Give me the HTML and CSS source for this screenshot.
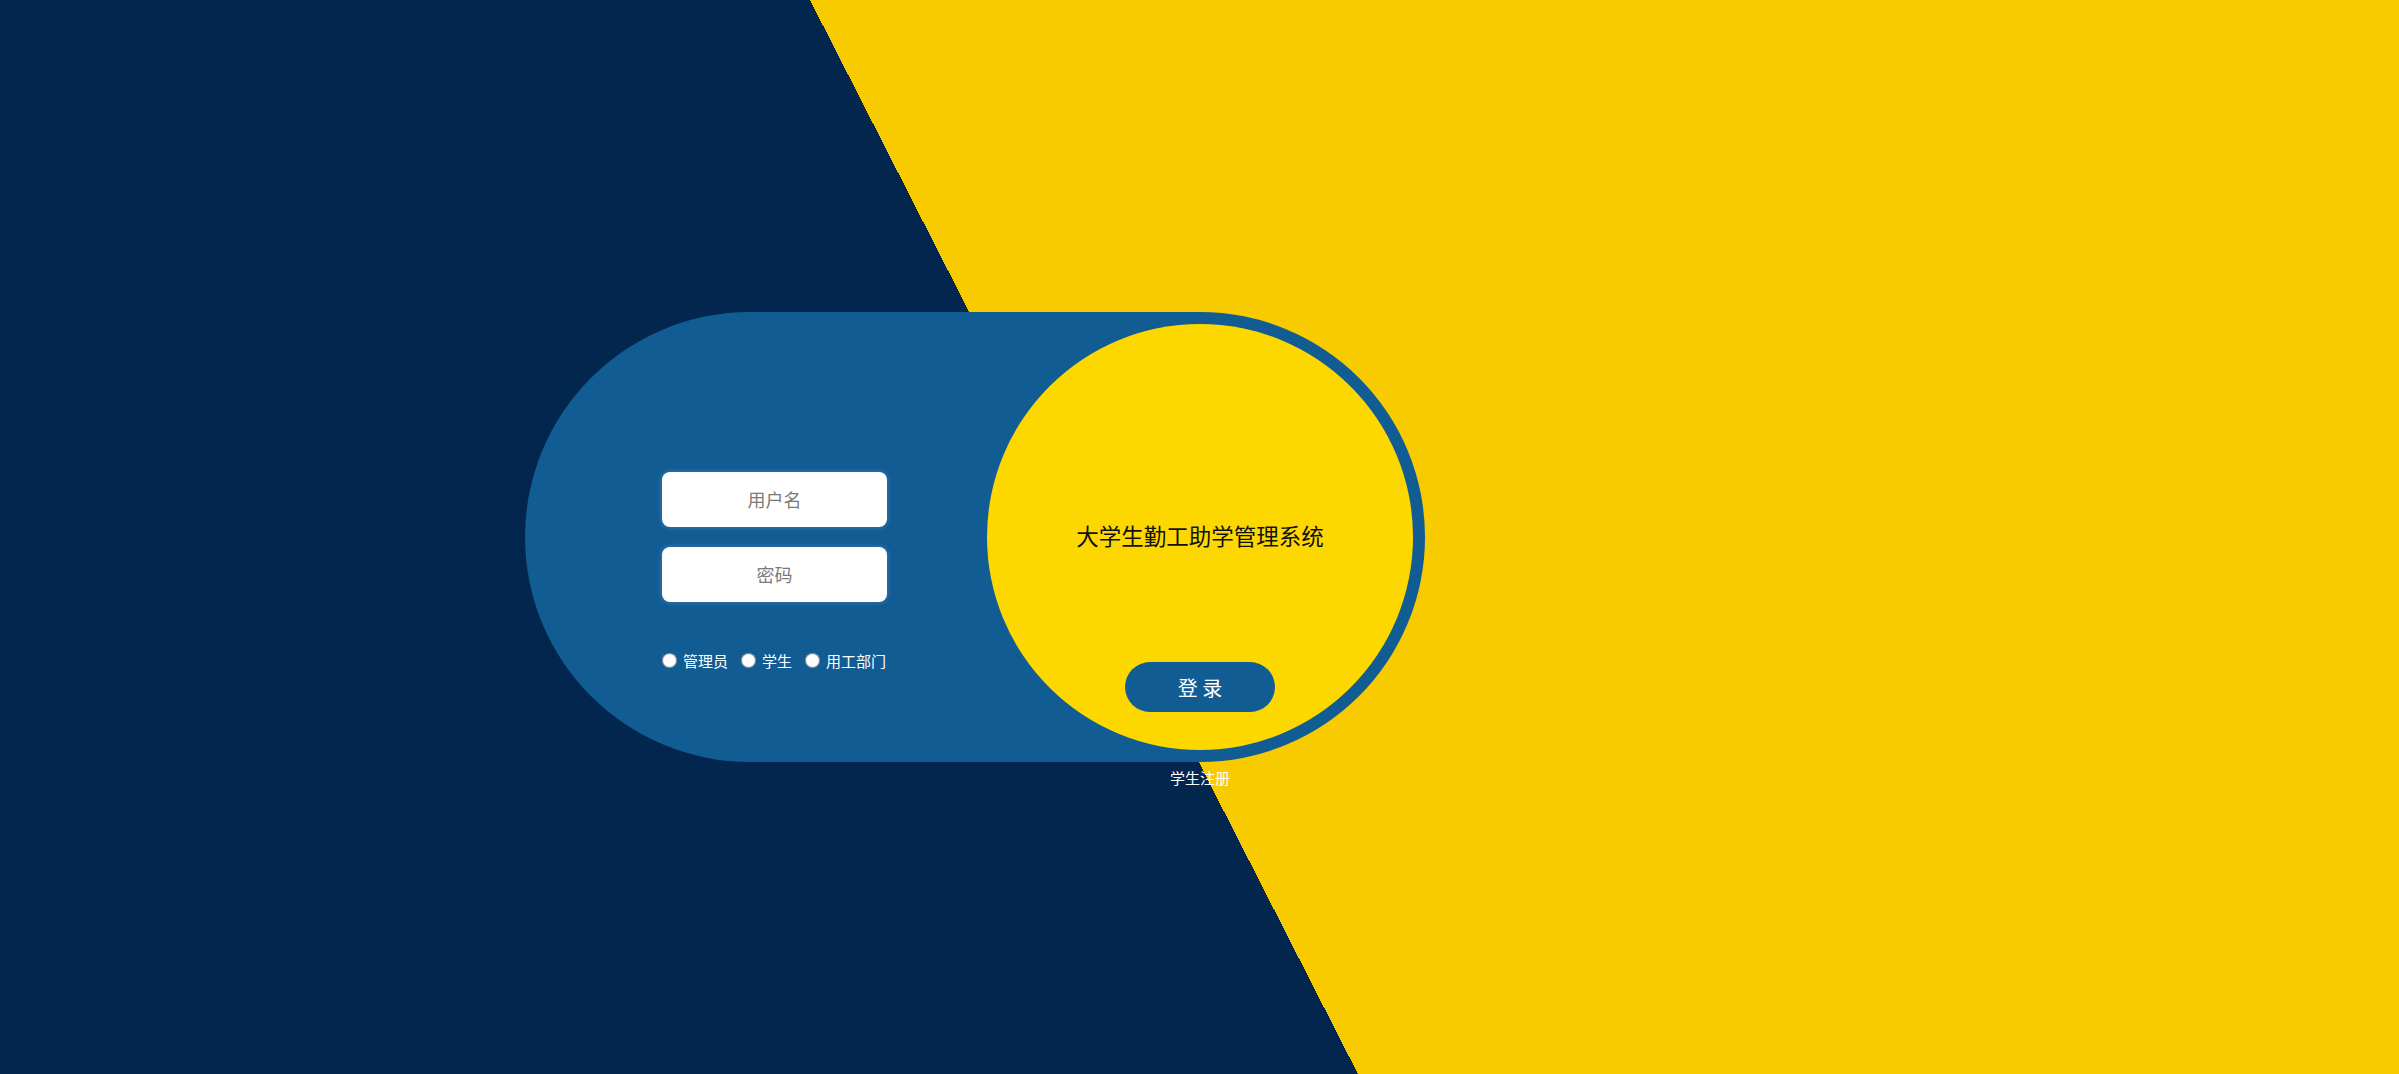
FILE: index.html
```html
<!DOCTYPE html>
<html lang="zh-CN">
<head>
<meta charset="utf-8">
<title>大学生勤工助学管理系统</title>
<link rel="stylesheet" href="styles.css">
</head>
<body>
<div class="page">
  <div class="login">
    <div class="pill">
      <form class="form">
        <input class="field" type="text" placeholder="用户名">
        <input class="field" type="password" placeholder="密码">
        <div class="roles">
          <label class="role"><input type="radio" name="role">管理员</label>
          <label class="role"><input type="radio" name="role">学生</label>
          <label class="role"><input type="radio" name="role">用工部门</label>
        </div>
      </form>
      <div class="circle">
        <div class="title">大学生勤工助学管理系统</div>
        <button class="btn" type="button">登 录</button>
      </div>
    </div>
    <div class="below">
      <a class="register" href="#">学生注册</a>
    </div>
  </div>
</div>
</body>
</html>
```

FILE: styles.css
```css
html, body {
  margin: 0;
  padding: 0;
  height: 100%;
}
body {
  font-family: "Noto Sans CJK SC", "Noto Sans", sans-serif;
}
.page {
  box-sizing: border-box;
  width: 100%;
  height: 100vh;
  overflow: hidden;
  padding: 312px 0 0 525px;
  background: linear-gradient(62.97deg, #03264f 1209.6px, #f7cb00 1209.6px);
}
.login {
  width: 900px;
}
.pill {
  width: 900px;
  height: 450px;
  border-radius: 225px;
  background: #125c94;
  display: flex;
  justify-content: space-between;
}
.form {
  display: flex;
  flex-direction: column;
  padding: 160px 0 0 137px;
  margin: 0;
}
.field {
  box-sizing: border-box;
  width: 225px;
  height: 55px;
  padding: 0 0 2px 0;
  border: none;
  border-radius: 8px;
  background: #fff;
  outline: none;
  text-align: center;
  font-family: "Noto Sans CJK SC", sans-serif;
  font-size: 18px;
  color: #333;
  box-shadow: 0 0 5px rgba(110, 160, 215, 0.55);
  margin: 0 0 20px 0;
}
.field::placeholder {
  color: #7a7a7a;
}
.roles {
  display: flex;
  align-items: center;
  height: 20px;
  margin-top: 28px;
  color: #fff;
  font-size: 15px;
}
.role {
  display: flex;
  align-items: center;
  margin-right: 13px;
  white-space: nowrap;
}
.role:last-child {
  margin-right: 0;
}
.role input {
  width: 15px;
  height: 15px;
  margin: 0 6px 0 0;
}
.circle {
  box-sizing: border-box;
  width: 426px;
  height: 426px;
  margin: 12px 12px 0 0;
  border-radius: 50%;
  background: #fdd800;
  display: flex;
  flex-direction: column;
  align-items: center;
  padding-top: 196px;
}
.title {
  font-size: 22.5px;
  line-height: 30px;
  color: #111;
}
.btn {
  margin-top: 112px;
  width: 150px;
  height: 50px;
  border: none;
  border-radius: 25px;
  background: #125c94;
  color: #fff;
  font-family: "Noto Sans CJK SC", sans-serif;
  font-size: 20px;
  cursor: pointer;
}
.below {
  display: flex;
  justify-content: flex-end;
  margin-top: 6px;
}
.register {
  width: 450px;
  text-align: center;
  color: #fff;
  font-size: 15px;
  line-height: 20px;
  text-decoration: none;
}
```
